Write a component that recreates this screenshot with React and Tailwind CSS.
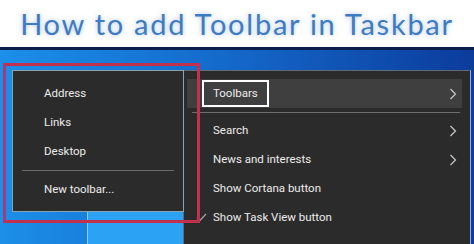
import React from 'react';

const Chevron = () => (
    <svg width="8" height="12" viewBox="0 0 8 12" className="shrink-0">
        <polyline points="1.5,1 6.5,6 1.5,11" fill="none" stroke="#c9c9c9" strokeWidth="1.2" />
    </svg>
);

const Check = () => (
    <svg width="11" height="9" viewBox="0 0 11 9">
        <polyline points="1,4.5 4,7.5 10,1" fill="none" stroke="#a9a9a9" strokeWidth="1.2" />
    </svg>
);

const subItems = ['Address', 'Links', 'Desktop'];

const mainItems = [
    { label: 'Search', arrow: true },
    { label: 'News and interests', arrow: true },
    { label: 'Show Cortana button' },
    { label: 'Show Task View button', checked: true },
];

const App = () => {
    return (
        <div className="w-[474px] h-[244px] overflow-hidden flex flex-col bg-white font-['Roboto',sans-serif]">
            {/* Title */}
            <div className="h-[47px] shrink-0 flex items-center justify-center bg-white">
                <h1 className="text-[29px] leading-none tracking-[1.75px] text-[#3d7cc4] font-['Lato',sans-serif] [text-shadow:0_0_5px_rgba(110,150,200,0.55)]">
                    How to add Toolbar in Taskbar
                </h1>
            </div>
            <div className="h-[3px] shrink-0 bg-[#0c1f4a]" />

            {/* Desktop */}
            <div className="relative flex-1 min-h-0 flex items-start pt-[20px] pl-[12px] bg-linear-to-r from-[#1c8fe8] via-[#1467c9] to-[#0c3c9c]">
                {/* taskbar window under the submenu */}
                <div className="absolute left-[87px] top-[160px] w-[100px] h-[40px] bg-[#2ba2f4] border-l border-[#8fd0ff]" />

                {/* Toolbars submenu */}
                <div className="relative z-10 w-[172px] h-[142px] py-[8px] bg-[#2b2b2b] border border-[#8aa3ae] text-[11.5px] text-[#ececec]">
                    {subItems.map((item) => (
                        <div key={item} className="h-[29px] flex items-center pl-[31px]">{item}</div>
                    ))}
                    <div className="h-[9px] flex items-center px-[9px]">
                        <div className="h-px w-full bg-[#6b6b6b]" />
                    </div>
                    <div className="h-[29px] flex items-center pl-[31px]">New toolbar...</div>
                </div>

                {/* Context menu */}
                <div className="relative ml-[-1px] w-[288px] h-[190px] shrink-0 pt-[8px] pl-[3px] pr-[8px] bg-[#2b2b2b] border border-[#5f6b76] border-r-[#8fb0d8] text-[11.5px] text-[#ececec]">
                    <div className="h-[29px] flex items-center justify-between pl-[15px] pr-[5px] bg-[#3f3f3f]">
                        <div className="h-[27px] flex items-center px-[9px] border-2 border-white">Toolbars</div>
                        <Chevron />
                    </div>
                    <div className="h-[8px] flex items-center pl-[5px] pr-[2px]">
                        <div className="h-px w-full bg-[#6e6e6e]" />
                    </div>
                    {mainItems.map((item) => (
                        <div key={item.label} className="h-[29px] flex items-center justify-between pr-[5px]">
                            <div className="flex items-center">
                                <div className="w-[26px] flex justify-center pl-[2px]">{item.checked && <Check />}</div>
                                <span>{item.label}</span>
                            </div>
                            {item.arrow && <Chevron />}
                        </div>
                    ))}
                </div>

                {/* annotation box */}
                <div className="absolute left-[3px] top-[13px] w-[197px] h-[160px] z-20 border-[3px] border-[#c23050] border-l-[#a63a78]" />
            </div>
        </div>
    );
};

export default App;
